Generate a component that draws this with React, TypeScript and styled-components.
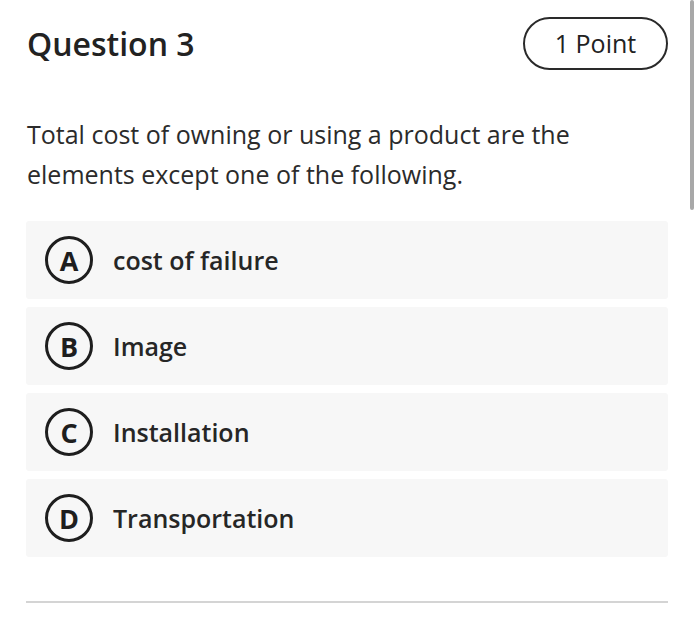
import React from 'react';
import styled, { createGlobalStyle } from 'styled-components';

const GlobalStyle = createGlobalStyle`
  html, body {
    margin: 0;
    padding: 0;
    background: #ffffff;
  }
  body {
    font-family: "Open Sans", "Noto Sans", sans-serif;
    color: #1f1f1f;
  }
`;

const Page = styled.div`
  position: relative;
  width: 700px;
  height: 622px;
  overflow: hidden;
  background: #fff;
`;

const Content = styled.div`
  padding: 16px 32px 0 26px;
  display: flex;
  flex-direction: column;
`;

const Header = styled.div`
  display: flex;
  align-items: center;
  justify-content: space-between;
  height: 54px;
`;

const Title = styled.h2`
  margin: 0 0 0 1px;
  font-size: 32px;
  font-weight: 600;
  color: #222;
`;

const PointPill = styled.div`
  box-sizing: border-box;
  width: 145px;
  height: 53px;
  border: 2px solid #2a2a2a;
  border-radius: 27px;
  display: flex;
  align-items: center;
  justify-content: center;
  font-size: 25px;
  font-weight: 500;
  color: #222;
`;

const Prompt = styled.p`
  margin: 44px 0 0 1px;
  font-size: 25px;
  line-height: 40px;
  color: #2b2b2b;
  font-weight: 400;
`;

const Options = styled.ul`
  list-style: none;
  margin: 27px 0 0;
  padding: 0;
  display: flex;
  flex-direction: column;
  gap: 8px;
`;

const Option = styled.li`
  height: 78px;
  background: #f7f7f7;
  border-radius: 3px;
  display: flex;
  align-items: center;
  padding-left: 19px;
`;

const Letter = styled.span`
  box-sizing: border-box;
  width: 48px;
  height: 48px;
  border: 3px solid #1e1e1e;
  border-radius: 50%;
  display: flex;
  align-items: center;
  justify-content: center;
  font-size: 27px;
  font-weight: 700;
  color: #1e1e1e;
  flex-shrink: 0;
`;

const OptionText = styled.span`
  margin-left: 20px;
  font-size: 25px;
  font-weight: 600;
  color: #262626;
`;

const Divider = styled.hr`
  margin: 44px 0 0;
  border: none;
  height: 2px;
  background: #d4d4d4;
`;

const Scrollbar = styled.div`
  position: absolute;
  top: 0;
  right: 6px;
  width: 4px;
  height: 210px;
  background: #a8a8a8;
  border-radius: 2px;
`;

const options = [
  { letter: 'A', text: 'cost of failure' },
  { letter: 'B', text: 'Image' },
  { letter: 'C', text: 'Installation' },
  { letter: 'D', text: 'Transportation' },
];

export default function App() {
  return (
    <Page>
      <GlobalStyle />
      <Content>
        <Header>
          <Title>Question 3</Title>
          <PointPill>1 Point</PointPill>
        </Header>
        <Prompt>
          Total cost of owning or using a product are the
          <br />
          elements except one of the following.
        </Prompt>
        <Options>
          {options.map((o) => (
            <Option key={o.letter}>
              <Letter>{o.letter}</Letter>
              <OptionText>{o.text}</OptionText>
            </Option>
          ))}
        </Options>
        <Divider />
      </Content>
      <Scrollbar />
    </Page>
  );
}
